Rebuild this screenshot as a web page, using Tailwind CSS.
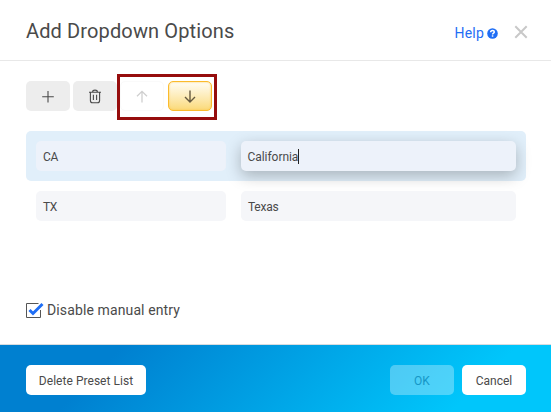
<!DOCTYPE html>
<html lang="en">
<head>
<meta charset="utf-8">
<title>Add Dropdown Options</title>
<script src="https://cdn.jsdelivr.net/npm/@tailwindcss/browser@4"></script>
</head>
<body class="bg-white">
<div class="w-[551px] h-[412px] flex flex-col overflow-hidden font-['Roboto','Liberation_Sans',sans-serif] text-[#4a4a4a] text-xs">
  <header class="h-[61px] shrink-0 border-b border-[#e8e8e8] flex items-center justify-between pl-[26px] pr-[23px]">
    <h1 class="text-[20px] leading-[28px] tracking-[0.13px] pt-[2px]">Add Dropdown Options</h1>
    <div class="flex items-center pt-[5px]">
      <a class="text-[14px] leading-5 tracking-[0.2px] text-[#1f6ef5]">Help</a>
      <svg class="ml-[3px] mt-[2px]" width="11" height="11" viewBox="0 0 11 11"><circle cx="5.5" cy="5.5" r="5.3" fill="#1f6ef5"/><path d="M3.7 4.2C3.7 2.9 4.5 2.4 5.5 2.4S7.3 3 7.3 4C7.3 5.1 5.6 5.2 5.6 6.4" fill="none" stroke="#fff" stroke-width="1.5"/><rect x="4.8" y="7.3" width="1.5" height="1.4" fill="#fff"/></svg>
      <svg class="ml-[16px] -mt-[2px]" width="14" height="14" viewBox="0 0 14 14" stroke="#c8c8c8" stroke-width="2"><path d="M1.3 1.3 12.7 12.7M12.7 1.3 1.3 12.7"/></svg>
    </div>
  </header>

  <main class="flex-1 flex flex-col px-[26px] pt-5">
    <div class="relative flex gap-[3px] h-[30px]">
      <button class="w-11 rounded-[5px] bg-[#ededed] flex items-center justify-center"><svg width="14" height="14" viewBox="0 0 14 14" stroke="#4a4a4a" stroke-width="1.1"><path d="M7 2v11.5M1.2 7.8h11.6"/></svg></button>
      <button class="w-11 rounded-[5px] bg-[#ededed] flex items-center justify-center"><svg width="14" height="16" viewBox="0 0 14 16" fill="none" stroke="#4a4a4a" stroke-width="1.1"><path d="M1 4.2h12M4.6 4C4.7 1.5 9.3 1.5 9.4 4M2.4 4.5v8q0 2.3 2.2 2.3h4.8q2.2 0 2.2-2.3v-8M5.4 6.7v5.3M8.6 6.7v5.3"/></svg></button>
      <button class="w-11 rounded-[5px] border border-[#fafafa] flex items-center justify-center"><svg width="12" height="14" viewBox="0 0 12 14" fill="none" stroke="#cfcfcf" stroke-width="1.3"><path d="M6 13.5V2M1 7.3 6 2.3l5 5"/></svg></button>
      <button class="ml-px w-11 rounded-[5px] border border-[#fbbb2c] bg-linear-to-b from-[#fffdf5] to-[#fbda78] shadow-[inset_0_0_2px_#fbc64c] flex items-center justify-center"><svg width="12" height="14" viewBox="0 0 12 14" fill="none" stroke="#665a40" stroke-width="1.4"><path d="M6 1.5v11.5M1 8l5 5 5-5"/></svg></button>
      <div class="absolute left-[91px] -top-[7px] w-[100px] h-[46px] border-3 border-[#960d0d]"></div>
    </div>

    <div class="mt-5 w-[500px] h-[50px] rounded-[5px] bg-[#e1effa] p-[10px] grid grid-cols-[190px_275px] gap-x-[15px]">
      <div class="h-[30px] rounded-[5px] bg-[#edf2fa] px-[7px] pt-[2px] tracking-[-0.2px] flex items-center">CA</div>
      <div class="h-[30px] rounded-[5px] bg-[#edf2fa] pl-[6.5px] flex items-center shadow-[0_5px_15px_rgba(0,0,0,0.25)]"><span class="pt-[2px] tracking-[-0.05px]">California</span><span class="w-px h-[15px] mt-px bg-[#222]"></span></div>
    </div>
    <div class="w-[500px] h-[50px] p-[10px] grid grid-cols-[190px_275px] gap-x-[15px]">
      <div class="h-[30px] rounded-[5px] bg-[#f5f6f9] px-[7px] pt-[2px] tracking-[-0.3px] flex items-center">TX</div>
      <div class="h-[30px] rounded-[5px] bg-[#f5f6f9] px-[7px] pt-[2px] tracking-[-0.25px] flex items-center">Texas</div>
    </div>

    <label class="mt-[69px] h-5 flex items-center">
      <svg width="18" height="16" viewBox="0 0 18 16" fill="none"><path d="M14.5 8v7.5H.5V1.5h12" stroke="#555"/><path d="M3.5 8 7 11.5 16.5 2" stroke="#1f6ef5" stroke-width="3"/></svg>
      <span class="ml-[3px] text-[14px] leading-5 tracking-[0.12px]">Disable manual entry</span>
    </label>
  </main>

  <footer class="h-[68px] shrink-0 border-t border-[#d8dcdf] bg-[linear-gradient(135deg,#0080d0_20%,#00c6fb_84%)] flex items-start pt-5 px-[26px] pr-[25px]">
    <button class="w-[120px] h-[30px] rounded-[5px] bg-white pt-[2px] tracking-[0.04px]">Delete Preset List</button>
    <button class="ml-auto w-16 h-[30px] rounded-[5px] bg-white/30 pt-[2px] text-[#1697c7]">OK</button>
    <button class="ml-2 w-16 h-[30px] rounded-[5px] bg-white pt-[2px]">Cancel</button>
  </footer>
</div>
</body>
</html>
